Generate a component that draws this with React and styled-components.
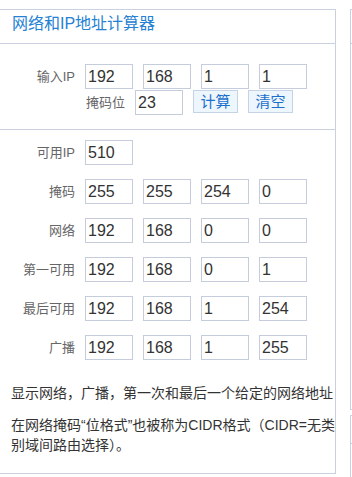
import React from "react";
import styled, { createGlobalStyle } from "styled-components";

const Global = createGlobalStyle`
  *, *::before, *::after { box-sizing: border-box; }
  html, body { margin: 0; padding: 0; background: #fff; overflow: hidden; }
  body {
    font-family: "Liberation Sans", Arial, "Noto Sans CJK SC", sans-serif;
    color: #333;
  }
`;

const Page = styled.div`
  display: flex;
  align-items: flex-start;
  margin-left: -1px;
  padding-top: 9px;
  width: calc(100% + 1px);
  overflow: hidden;
`;

const Panel = styled.div`
  flex: none;
  width: 337px;
  border: 1px solid #c9d0df;
  background: #fff;
`;

const Header = styled.div`
  height: 34px;
  padding: 3px 11px 0 12px;
  line-height: 22px;
  font-size: 16px;
  color: #2481d4;
  border-bottom: 1px solid #c9d0df;
`;

const Section = styled.div`
  padding: ${(p) => p.$pad};
  border-bottom: ${(p) => (p.$divider ? "1px solid #c9d0df" : "none")};
  display: flex;
  flex-direction: column;
  gap: ${(p) => p.$gap || 0}px;
`;

const Row = styled.div`
  display: flex;
  align-items: center;
  gap: 10px;
  margin-left: ${(p) => p.$indent || 0}px;
  margin-top: ${(p) => p.$top || 0}px;
`;

const Label = styled.div`
  width: ${(p) => p.$w}px;
  text-align: right;
  font-size: 13px;
  line-height: 18px;
  color: #666;
  white-space: nowrap;
  flex: none;
`;

const Field = styled.input`
  flex: none;
  width: 48px;
  height: 25px;
  margin: 0;
  padding: 0 2px;
  border: 1px solid #c5ccdb;
  border-radius: 0;
  background: #fff;
  font-family: "Liberation Sans", Arial, sans-serif;
  font-size: 16px;
  color: #333;
  outline: none;
`;

const Button = styled.button`
  flex: none;
  width: 45px;
  height: 23px;
  margin: 0;
  padding: 0;
  border: 1px solid #c6d3e6;
  border-radius: 0;
  background: #edf5fd;
  color: #1c70cb;
  font-family: "Liberation Sans", "Noto Sans CJK SC", sans-serif;
  font-size: 15px;
  line-height: 21px;
  align-self: flex-start;
  cursor: pointer;
`;

const Notes = styled.div`
  padding: 23px 0 18px 11px;
  margin-right: -6px;
  font-size: 14px;
  line-height: 20px;
  color: #333;
`;

const Note = styled.p`
  margin: ${(p) => (p.$first ? 0 : "12px")} 0 0;
`;

const Side = styled.div`
  flex: 1;
  min-width: 0;
  margin-left: 14px;
  display: flex;
  flex-direction: column;
  gap: 5px;
`;

const SideBox = styled.div`
  height: ${(p) => p.$h}px;
  border: 1px solid #c9d0df;
  border-right: none;
`;

const SideHead = styled.div`
  height: ${(p) => p.$h}px;
  border-bottom: 1px solid #c9d0df;
`;

const results = [
  { label: "掩码", v: ["255", "255", "254", "0"] },
  { label: "网络", v: ["192", "168", "0", "0"] },
  { label: "第一可用", v: ["192", "168", "0", "1"] },
  { label: "最后可用", v: ["192", "168", "1", "254"] },
  { label: "广播", v: ["192", "168", "1", "255"] },
];

export default function App() {
  return (
    <>
      <Global />
      <Page>
        <Panel>
          <Header>网络和IP地址计算器</Header>
          <Section $pad="20px 0 14px" $divider>
            <Row>
              <Label $w={75}>输入IP</Label>
              {["192", "168", "1", "1"].map((v, i) => (
                <Field key={i} defaultValue={v} />
              ))}
            </Row>
            <Row $indent={85} $top={1}>
              <Label $w={40}>掩码位</Label>
              <Field defaultValue="23" />
              <Button>计算</Button>
              <Button>清空</Button>
            </Row>
          </Section>
          <Section $pad="10px 0 0" $gap={14}>
            <Row>
              <Label $w={75}>可用IP</Label>
              <Field defaultValue="510" />
            </Row>
            {results.map((r) => (
              <Row key={r.label}>
                <Label $w={75}>{r.label}</Label>
                {r.v.map((v, i) => (
                  <Field key={i} defaultValue={v} />
                ))}
              </Row>
            ))}
          </Section>
          <Notes>
            <Note $first>显示网络，广播，第一次和最后一个给定的网络地址</Note>
            <Note>
              在网络掩码“位格式”也被称为CIDR格式（CIDR=无类别域间路由选择）。
            </Note>
          </Notes>
        </Panel>
        <Side>
          <SideBox $h={401}>
            <SideHead $h={34} />
          </SideBox>
          <SideBox $h={80}>
            <SideHead $h={28} />
          </SideBox>
        </Side>
      </Page>
    </>
  );
}
